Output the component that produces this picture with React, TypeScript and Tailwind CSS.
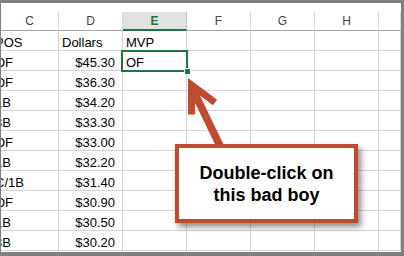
const COLUMNS = ["C", "D", "E", "F", "G", "H", ""];

const ROWS = [
  ["POS", "Dollars", "MVP"],
  ["OF", "$45.30", "OF"],
  ["OF", "$36.30", ""],
  ["1B", "$34.20", ""],
  ["3B", "$33.30", ""],
  ["OF", "$33.00", ""],
  ["1B", "$32.20", ""],
  ["C/1B", "$31.40", ""],
  ["OF", "$30.90", ""],
  ["1B", "$30.50", ""],
  ["3B", "$30.20", ""],
];

const RED = "#c04a2f";

function colWidth(i: number) {
  if (i === 0) return "w-[58px] shrink-0";
  if (i === COLUMNS.length - 1) return "flex-1";
  return "w-[64px] shrink-0";
}

function HeaderRow() {
  return (
    <div className="flex h-[19px]">
      {COLUMNS.map((c, i) => (
        <div
          key={i}
          className={
            colWidth(i) +
            (c === "E"
              ? " flex items-center justify-center border-r border-r-[#c6c6c6] border-b-2 border-b-[#217346] bg-[#e1e1e1] font-bold text-[#217346] text-[12px]"
              : " flex items-center justify-center border-r border-r-[#d8d8d8] border-b border-b-[#a6a6a6] text-[#444] text-[12px]")
          }
        >
          {c}
        </div>
      ))}
    </div>
  );
}

function DataRow({ cells }: { cells: string[] }) {
  const [pos, dollars, mvp] = cells;
  const isHead = dollars === "Dollars";
  return (
    <div className="flex h-[20px] text-[13px] leading-[15px] text-black">
      <div className={colWidth(0) + " flex items-end overflow-hidden whitespace-nowrap border-r border-b border-[#d4d4d4]"}>
        <span className="-ml-[6px]">{pos}</span>
      </div>
      <div
        className={
          colWidth(1) +
          " flex items-end whitespace-nowrap border-r border-b border-[#d4d4d4] " +
          (isHead ? "justify-start pl-[3px]" : "justify-end pr-[7px]")
        }
      >
        {dollars}
      </div>
      <div className={colWidth(2) + " flex items-end pl-[3px] border-r border-b border-[#d4d4d4]"}>{mvp}</div>
      {[3, 4, 5, 6].map((i) => (
        <div key={i} className={colWidth(i) + " border-r border-b border-[#d4d4d4]"} />
      ))}
    </div>
  );
}

export default function App() {
  return (
    <div className="w-[404px] h-[256px] bg-[#808080] pt-[3px] pr-[3px] pb-[4px] pl-[1px] font-['Liberation_Sans',Arial,sans-serif]">
      <div className="relative w-[400px] h-[249px] overflow-hidden bg-white">
        <div className="h-[9px]" />
        <HeaderRow />
        {ROWS.map((r, i) => (
          <DataRow key={i} cells={r} />
        ))}

        {/* active cell E2 */}
        <div className="absolute left-[120px] top-[47px] w-[67px] h-[22px] border-2 border-[#217346]" />
        <div className="absolute left-[183px] top-[65px] w-[7px] h-[7px] border border-white bg-[#217346]" />

        {/* arrow */}
        <svg
          className="absolute left-[-1px] top-[-3px]"
          width="404"
          height="256"
          viewBox="0 0 404 256"
          fill="none"
          aria-hidden="true"
        >
          <line x1="222" y1="150" x2="193" y2="90" stroke={RED} strokeWidth="7.5" />
          <polyline
            points="191.5,114.5 191.5,85 215,102.5"
            stroke={RED}
            strokeWidth="7"
            strokeLinejoin="miter"
            strokeLinecap="butt"
          />
        </svg>

        {/* callout */}
        <div className="absolute left-[174px] top-[141px] w-[183px] h-[79px] flex items-center justify-center border-4 border-[#c04a2f] bg-white shadow-[3px_4px_6px_rgba(0,0,0,0.45)]">
          <p className="text-center text-[18px] leading-[22px] font-bold text-black">
            Double-click on
            <br />
            this bad boy
          </p>
        </div>
      </div>
    </div>
  );
}
